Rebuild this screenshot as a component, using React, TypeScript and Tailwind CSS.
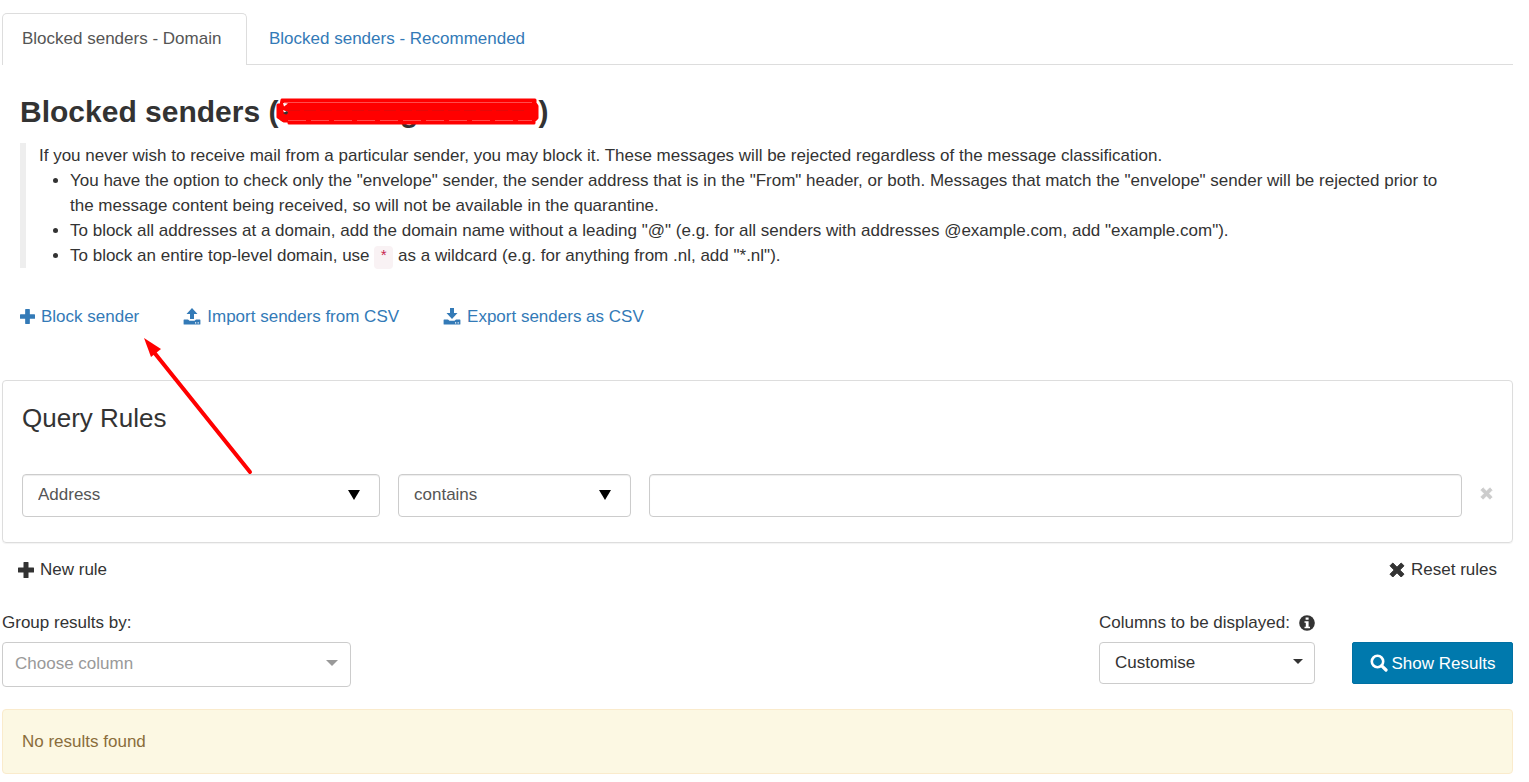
import { useState, type ReactNode } from "react";

type IconProps = { className?: string };

function PlusIcon({ className }: IconProps) {
  return (
    <svg viewBox="0 0 16 16" className={className} fill="currentColor" aria-hidden="true">
      <path d="M6 0h4a.5.5 0 0 1 .5.5v5H15.500a.5.5 0 0 1 .5.5v4a.5.5 0 0 1-.5.5h-5v5a.5.5 0 0 1-.5.5H6a.5.5 0 0 1-.5-.5v-5H.5A.5.5 0 0 1 0 10V6a.5.5 0 0 1 .5-.5h5V.5A.5.5 0 0 1 6 0z" />
    </svg>
  );
}

function CrossIcon({ className }: IconProps) {
  return (
    <svg viewBox="0 0 16 16" className={className} fill="currentColor" aria-hidden="true">
      <path
        d="M3.800 1 8 5.200 12.200 1 15 3.800 10.800 8l4.200 4.200-2.800 2.800L8 10.800 3.800 15 1 12.200 5.200 8 1 3.800z"
        stroke="currentColor"
        strokeLinejoin="round"
      />
    </svg>
  );
}

function TrayIcon({ className, up }: IconProps & { up?: boolean }) {
  return (
    <svg viewBox="0 0 18 18" className={className} fill="currentColor" aria-hidden="true">
      {up ? <path d="M9 0 14.500 6H11v5H7V6H3.500z" /> : <path d="M7 0h4v5h3.500L9 11 3.500 5H7z" />}
      <path
        fillRule="evenodd"
        d="M1.200 11.500H5l1.500 1.300h5L13 11.500h3.800a.6.6 0 0 1 .6.6V16a.6.6 0 0 1-.6.6H1.200a.6.6 0 0 1-.6-.6v-3.900a.6.6 0 0 1 .6-.6zM12 14.200v1.200h1.200v-1.200zM14.600 14.200v1.200h1.200v-1.200z"
      />
    </svg>
  );
}

function InfoIcon({ className }: IconProps) {
  return (
    <svg viewBox="0 0 16 16" className={className} aria-hidden="true">
      <circle cx="8" cy="8" r="7.800" fill="currentColor" />
      <path d="M6.600 2.500h3v2.300h-3zM5.500 6.200h4.100v5.500H11v1.600H5.500v-1.600h1.300V7.800H5.500z" fill="#fff" />
    </svg>
  );
}

function SearchIcon({ className }: IconProps) {
  return (
    <svg viewBox="0 0 18 18" className={className} fill="none" stroke="currentColor" aria-hidden="true">
      <circle cx="7.500" cy="7.500" r="5.700" strokeWidth="2.600" />
      <path d="m11.800 11.800 4.200 4.200" strokeWidth="3.200" strokeLinecap="round" />
    </svg>
  );
}

function SelectBox({
  label,
  value,
  className,
  arrow,
}: {
  label: string;
  value: string;
  className: string;
  arrow: ReactNode;
}) {
  return (
    <div className="relative">
      <select
        aria-label={label}
        className={`w-full appearance-none rounded border border-[#ccc] bg-white pb-[2px] outline-none focus:border-[#66afe9] ${className}`}
      >
        <option>{value}</option>
      </select>
      {arrow}
    </div>
  );
}

const tabs = ["Domain", "Recommended"];

export default function App() {
  const [tab, setTab] = useState("Domain");
  const [query, setQuery] = useState("");

  return (
    <main className="relative bg-white pt-[13px] pr-4 pb-2 pl-[2px] font-['Liberation_Sans',Arial,sans-serif] text-[17px] leading-[25px] text-[#333]">
      {/* Tabs */}
      <nav className="flex border-b border-[#ddd]">
        {tabs.map((name) => (
          <button
            key={name}
            onClick={() => setTab(name)}
            className={
              tab === name
                ? "-mb-px h-[52px] min-w-[245px] rounded-t-[5px] border border-b-0 border-[#ddd] bg-white px-[19px] pb-[2px] text-left text-[#555]"
                : "h-[51px] min-w-[245px] px-[22px] text-left text-[#337ab7]"
            }
          >
            Blocked senders - {name}
          </button>
        ))}
      </nav>

      {/* Intro */}
      <section className="px-[18px] pt-[26px]">
        <h1 className="flex h-10 items-center text-[30px] font-bold">
          Blocked senders (
          <svg width="264" height="40" viewBox="0 0 264 40" className="-mx-[2px]" aria-hidden="true">
            <text x="2" y="31" fill="#333">s</text>
            <text x="124" y="31" fill="#333">g</text>
            <path
              d="M6 9H259V12L261 15V27L258 30V32H13V30H8L2 26V14H5z"
              fill="#f00"
              stroke="#f00"
              strokeWidth="3"
              strokeLinejoin="round"
            />
            <path d="M8 11.500h248" stroke="#ff4d4d" />
            <path d="M12 29.500h244" stroke="#ff4d4d" strokeDasharray="18 5" />
            <path d="M12 19.500h240" stroke="#e60808" strokeDasharray="12 4" />
            <path d="m7 12 5 .5-4 3zM7 19l5 2-4 .500z" fill="#fff" />
            <path d="M7 22q4 3 5-.500l-1-1.500z" fill="#333" />
          </svg>
          )
        </h1>
        <div className="mt-3 border-l-6 border-[#eee] pl-[13px]">
          <p>
            If you never wish to receive mail from a particular sender, you may block it. These messages will be
            rejected regardless of the message classification.
          </p>
          <ul className="list-disc pl-[31px]">
            <li>
              You have the option to check only the "envelope" sender, the sender address that is in the "From"
              header, or both. Messages that match the "envelope" sender will be rejected prior to
              <br />
              the message content being received, so will not be available in the quarantine.
            </li>
            <li>
              To block all addresses at a domain, add the domain name without a leading "@" (e.g. for all senders with
              addresses @example.com, add "example.com").
            </li>
            <li>
              To block an entire top-level domain, use{" "}
              <code className="rounded bg-[#f9f2f4] px-[5px] py-[3px] font-['Liberation_Mono',monospace] text-[15px] leading-none text-[#c7254e]">
                *
              </code>{" "}
              as a wildcard (e.g. for anything from .nl, add "*.nl").
            </li>
          </ul>
        </div>
      </section>

      {/* Actions */}
      <div className="mt-9 flex gap-11 px-[18px] text-[#337ab7]">
        <a href="#block" className="flex items-center gap-[6px]">
          <PlusIcon className="size-[15px]" />
          Block sender
        </a>
        <a href="#import" className="flex items-center gap-[6px]">
          <TrayIcon up className="size-[18px]" />
          Import senders from CSV
        </a>
        <a href="#export" className="flex items-center gap-[6px]">
          <TrayIcon className="size-[18px]" />
          Export senders as CSV
        </a>
      </div>

      {/* Query rules */}
      <section className="mt-[51px] rounded border border-[#ddd] px-[19px] pt-[19px] pb-[25px] shadow-[0_1px_1px_rgba(0,0,0,0.05)]">
        <h2 className="text-[26px] leading-9">Query Rules</h2>
        <div className="mt-[38px] grid grid-cols-[358fr_233fr_813fr_auto] items-center gap-[18px]">
          <SelectBox
            label="Field"
            value="Address"
            className="h-[43px] px-[15px] text-[#555] shadow-[inset_0_1px_1px_rgba(0,0,0,0.075)]"
            arrow={
              <svg viewBox="0 0 12 10" className="pointer-events-none absolute top-4 right-5 h-[10px] w-3">
                <path d="M0 0h12L6 10z" />
              </svg>
            }
          />
          <SelectBox
            label="Operator"
            value="contains"
            className="h-[43px] px-[15px] text-[#555] shadow-[inset_0_1px_1px_rgba(0,0,0,0.075)]"
            arrow={
              <svg viewBox="0 0 12 10" className="pointer-events-none absolute top-4 right-5 h-[10px] w-3">
                <path d="M0 0h12L6 10z" />
              </svg>
            }
          />
          <input
            aria-label="Value"
            value={query}
            onChange={(e) => setQuery(e.target.value)}
            className="h-[43px] w-full rounded border border-[#ccc] px-[15px] text-[#555] shadow-[inset_0_1px_1px_rgba(0,0,0,0.075)] outline-none focus:border-[#66afe9]"
          />
          <button aria-label="Remove rule" className="pb-1 text-[#ccc]" onClick={() => setQuery("")}>
            <CrossIcon className="size-[13px]" />
          </button>
        </div>
      </section>

      <div className="mt-[14px] flex justify-between px-4">
        <button className="flex items-center gap-[6px]">
          <PlusIcon className="size-4" />
          New rule
        </button>
        <button className="flex items-center gap-[6px]" onClick={() => setQuery("")}>
          <CrossIcon className="size-4" />
          Reset rules
        </button>
      </div>

      {/* Results toolbar */}
      <div className="mt-7 flex items-start justify-between">
        <div className="w-[349px]">
          <div className="mb-[7px]">Group results by:</div>
          <SelectBox
            label="Group results by"
            value="Choose column"
            className="h-[45px] px-3 text-[#999]"
            arrow={
              <svg viewBox="0 0 12 6" className="pointer-events-none absolute top-[18px] right-[13px] h-[6px] w-3">
                <path d="M0 0h12L6 6z" fill="#999" />
              </svg>
            }
          />
        </div>
        <div className="flex items-end gap-[37px]">
          <div className="w-[216px]">
            <div className="mb-[7px] flex items-center justify-between whitespace-nowrap">
              Columns to be displayed:
              <InfoIcon className="size-4" />
            </div>
            <SelectBox
              label="Columns to be displayed"
              value="Customise"
              className="h-[42px] px-[15px] text-[#333]"
              arrow={
                <svg viewBox="0 0 10 5" className="pointer-events-none absolute top-[17px] right-3 h-[5px] w-[10px]">
                  <path d="M0 0h10L5 5z" fill="#333" />
                </svg>
              }
            />
          </div>
          <button className="flex h-[42px] w-[161px] items-center justify-center gap-1 rounded-[2px] border border-[#0070a3] bg-[#0079ad] text-white">
            <SearchIcon className="size-[18px]" />
            Show Results
          </button>
        </div>
      </div>

      <div className="mt-[22px] rounded border border-[#faebcc] bg-[#fcf8e3] px-[19px] py-[19px] text-[#8a6d3b]">
        No results found
      </div>

      {/* Pointer to the block action */}
      <svg
        viewBox="0 0 112 142"
        className="pointer-events-none absolute top-[335px] left-[141px] h-[142px] w-28"
        aria-hidden="true"
      >
        <path d="M12 16 109 137" stroke="#f00" strokeWidth="4" strokeLinecap="round" />
        <path d="m3 3 17 11-10 8z" fill="#f00" />
      </svg>
    </main>
  );
}
